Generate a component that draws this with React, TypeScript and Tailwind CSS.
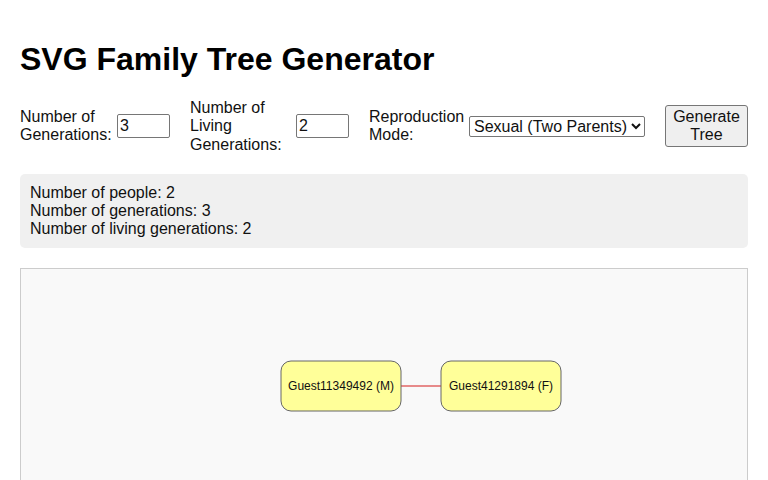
import { useMemo, useState } from 'react';

type Person = { name: string; sex: 'M' | 'F'; x: number; y: number };

const NODE_W = 120;
const NODE_H = 50;

function Field({ label, width, children }: { label: string; width: string; children: React.ReactNode }) {
  return (
    <label className="flex items-center gap-[5px]">
      <span className={`${width} leading-[1.15]`}>{label}</span>
      {children}
    </label>
  );
}

function TreeView({ people }: { people: Person[] }) {
  const [a, b] = people;
  return (
    <div className="h-[420px] border border-[#ccc] bg-[#f9f9f9]">
      <svg width="100%" height="100%">
        {a && b && (
          <line
            x1={a.x + NODE_W}
            y1={a.y + NODE_H / 2}
            x2={b.x}
            y2={b.y + NODE_H / 2}
            stroke="#e06464"
            strokeWidth={1.5}
          />
        )}
        {people.map((p) => (
          <g key={p.name}>
            <rect
              x={p.x}
              y={p.y}
              width={NODE_W}
              height={NODE_H}
              rx={10}
              fill="#ffff99"
              stroke="#666"
              strokeWidth={1}
            />
            <text
              x={p.x + NODE_W / 2}
              y={p.y + NODE_H / 2 + 4}
              textAnchor="middle"
              fontSize={12}
              fontFamily="'Liberation Sans', Arial, sans-serif"
              fill="#111"
            >
              {p.name} ({p.sex})
            </text>
          </g>
        ))}
      </svg>
    </div>
  );
}

export default function App() {
  const [generations, setGenerations] = useState('3');
  const [living, setLiving] = useState('2');
  const [mode, setMode] = useState('sexual');

  const people = useMemo<Person[]>(
    () => [
      { name: 'Guest11349492', sex: 'M', x: 260, y: 92 },
      { name: 'Guest41291894', sex: 'F', x: 420, y: 92 },
    ],
    []
  );

  return (
    <div className="p-5 text-[16px] leading-[1.15] text-[#111]" style={{ fontFamily: "'Liberation Sans', Arial, sans-serif" }}>
      <h1 className="my-[21px] text-[32px] font-bold leading-[1.15] text-black">SVG Family Tree Generator</h1>

      <div className="mb-5 flex items-center gap-5">
        <Field label="Number of Generations:" width="w-[92px]">
          <input
            type="number"
            value={generations}
            onChange={(e) => setGenerations(e.target.value)}
            className="h-6 w-[53px] rounded-[2px] border border-[#767676] bg-white px-0.5 [appearance:textfield]"
          />
        </Field>

        <Field label="Number of Living Generations:" width="w-[101px]">
          <input
            type="number"
            value={living}
            onChange={(e) => setLiving(e.target.value)}
            className="h-6 w-[53px] rounded-[2px] border border-[#767676] bg-white px-0.5 [appearance:textfield]"
          />
        </Field>

        <Field label="Reproduction Mode:" width="w-[95px]">
          <select
            value={mode}
            onChange={(e) => setMode(e.target.value)}
            className="h-[21px] w-[176px] rounded-[2px] border border-[#767676] bg-white"
          >
            <option value="sexual">Sexual (Two Parents)</option>
            <option value="asexual">Asexual (One Parent)</option>
          </select>
        </Field>

        <button className="h-[42px] w-[83px] rounded-[3px] border border-[#767676] bg-[#efefef] leading-[1.15]">
          Generate Tree
        </button>
      </div>

      <div className="mb-5 rounded-[5px] bg-[#f0f0f0] p-2.5 leading-[18px]">
        <div>Number of people: {people.length}</div>
        <div>Number of generations: {generations}</div>
        <div>Number of living generations: {living}</div>
      </div>

      <TreeView people={people} />
    </div>
  );
}
